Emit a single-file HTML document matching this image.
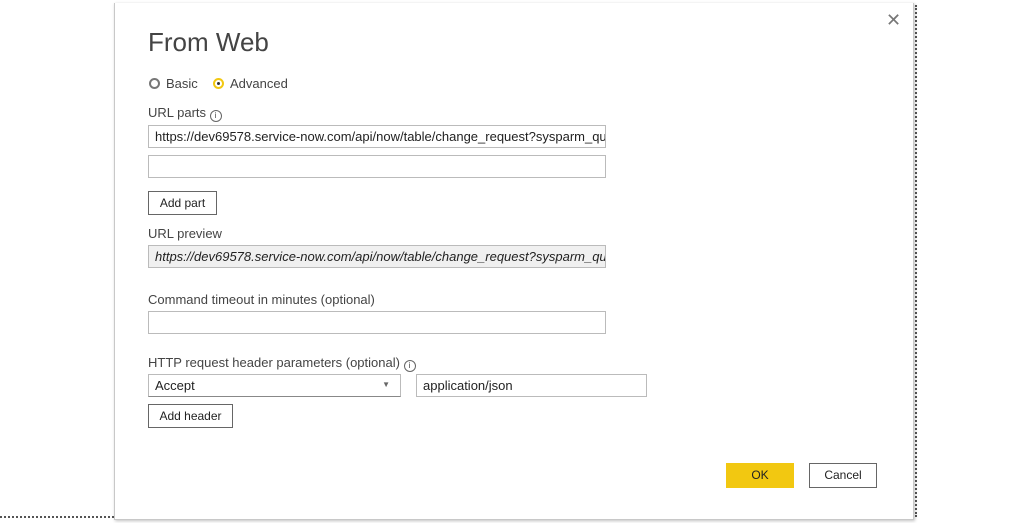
<!DOCTYPE html><html><head><style>
body{margin:0;width:1024px;height:523px;background:#fff;position:relative;overflow:hidden;font-family:"Liberation Sans",sans-serif;color:#333}
.a{position:absolute}
.dlg{left:114px;top:3px;width:798px;height:516px;border:1px solid #c8c8c8;border-top:none;box-shadow:1px 1px 3px rgba(0,0,0,.25);background:#fff}
.lbl{font-size:13px;color:#444}
.in{border:1px solid #bbb;background:#fff;box-sizing:border-box;height:23px;font-size:13px;color:#222;padding:3px 6px;white-space:nowrap;overflow:hidden}
.btn{border:1px solid #666;box-sizing:border-box;background:#fff;font-size:12px;text-align:center;color:#222}
</style></head><body>
<div class="a" style="left:0;top:516px;width:114px;border-top:2px dotted #555"></div>
<div class="a" style="left:915px;top:5px;height:512px;border-left:2px dotted #555"></div>
<div class="a" style="left:912px;top:5px;width:5px;border-top:2px dotted #555"></div>
<div class="a dlg"></div>
<div class="a" style="left:886px;top:10px;font-size:18px;color:#777">✕</div>
<div class="a" style="left:148px;top:27px;font-size:26px;color:#444">From Web</div>
<div class="a" style="left:149px;top:78px;width:7px;height:7px;border:2px solid #777;border-radius:50%"></div>
<div class="a lbl" style="left:166px;top:76px">Basic</div>
<div class="a" style="left:213px;top:78px;width:7px;height:7px;border:2px solid #f2c811;border-radius:50%"><div style="margin:2px;width:3px;height:3px;background:#333;border-radius:50%"></div></div>
<div class="a lbl" style="left:230px;top:76px">Advanced</div>
<div class="a lbl" style="left:148px;top:105px">URL parts <span style="display:inline-block;width:10px;height:10px;border:1px solid #666;border-radius:50%;font-size:8px;text-align:center;line-height:10px;vertical-align:-1px">i</span></div>
<div class="a in" style="left:148px;top:125px;width:458px">https://dev69578.service-now.com/api/now/table/change_request?sysparm_query</div>
<div class="a in" style="left:148px;top:155px;width:458px"></div>
<div class="a btn" style="left:148px;top:191px;width:69px;height:24px;line-height:22px">Add part</div>
<div class="a lbl" style="left:148px;top:226px">URL preview</div>
<div class="a in" style="left:148px;top:245px;width:458px;background:#f0f0f0;font-style:italic">https://dev69578.service-now.com/api/now/table/change_request?sysparm_query</div>
<div class="a lbl" style="left:148px;top:292px">Command timeout in minutes (optional)</div>
<div class="a in" style="left:148px;top:311px;width:458px"></div>
<div class="a lbl" style="left:148px;top:355px">HTTP request header parameters (optional) <span style="display:inline-block;width:10px;height:10px;border:1px solid #666;border-radius:50%;font-size:8px;text-align:center;line-height:10px;vertical-align:-1px">i</span></div>
<div class="a in" style="left:148px;top:374px;width:253px;border-bottom-color:#888">Accept<span style="position:absolute;right:10px;top:5px;font-size:8px;color:#666">▼</span></div>
<div class="a in" style="left:416px;top:374px;width:231px">application/json</div>
<div class="a btn" style="left:148px;top:404px;width:85px;height:24px;line-height:22px">Add header</div>
<div class="a btn" style="left:726px;top:463px;width:68px;height:25px;line-height:25px;background:#f2c811;border:none">OK</div>
<div class="a btn" style="left:809px;top:463px;width:68px;height:25px;line-height:23px">Cancel</div>
</body></html>
